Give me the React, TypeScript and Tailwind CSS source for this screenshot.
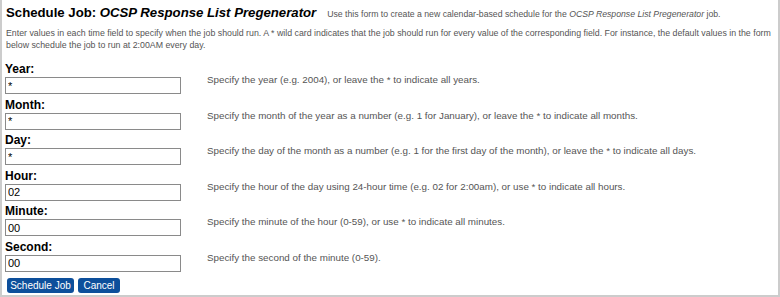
const rows = [
  { label: "Year:", value: "*", hint: "Specify the year (e.g. 2004), or leave the * to indicate all years." },
  { label: "Month:", value: "*", hint: "Specify the month of the year as a number (e.g. 1 for January), or leave the * to indicate all months." },
  { label: "Day:", value: "*", hint: "Specify the day of the month as a number (e.g. 1 for the first day of the month), or leave the * to indicate all days." },
  { label: "Hour:", value: "02", hint: "Specify the hour of the day using 24-hour time (e.g. 02 for 2:00am), or use * to indicate all hours." },
  { label: "Minute:", value: "00", hint: "Specify the minute of the hour (0-59), or use * to indicate all minutes." },
  { label: "Second:", value: "00", hint: "Specify the second of the minute (0-59)." },
];

export default function App() {
  return (
    <div className="w-[780px] h-[297px] bg-white border-l-2 border-r-2 border-b-2 border-[#cccccc] font-['Liberation_Sans',Arial,sans-serif] text-black overflow-hidden">
      <div className="pl-[4px] pt-[4px] flex items-baseline whitespace-nowrap">
        <h1 className="text-[13.2px] font-bold leading-[18px]">
          Schedule Job: <i>OCSP Response List Pregenerator</i>
        </h1>
        <span className="ml-[11px] text-[8.7px] text-[#555]">
          Use this form to create a new calendar-based schedule for the <i>OCSP Response List Pregenerator</i> job.
        </span>
      </div>
      <p className="pl-[4px] pr-[2px] mt-[5px] text-[8.8px] leading-[12px] text-[#555]">
        Enter values in each time field to specify when the job should run. A * wild card indicates that the job should run for every value of the corresponding field. For instance, the default values in the form below schedule the job to run at 2:00AM every day.
      </p>
      <div className="mt-[11px] pl-[3px]">
        {rows.map((r) => (
          <div key={r.label} className="flex h-[35.5px]">
            <div className="w-[202px] shrink-0">
              <div className="text-[12px] font-bold leading-[14px]">{r.label}</div>
              <input
                readOnly
                value={r.value}
                className="block mt-[1px] w-[176px] h-[17px] border border-[#8a8a8a] px-[2px] text-[11px] text-black outline-none font-['Liberation_Sans',Arial,sans-serif]"
              />
            </div>
            <div className="pt-[12px] text-[9.8px] text-[#555] leading-[12px] whitespace-nowrap">{r.hint}</div>
          </div>
        ))}
        <div className="flex gap-[4px] mt-[3px] pl-[2px]">
          <button className="h-[15px] w-[67px] rounded-[3px] bg-[#0d4f9b] text-white text-[10px] leading-[15px]">
            Schedule Job
          </button>
          <button className="h-[15px] w-[42px] rounded-[3px] bg-[#0d4f9b] text-white text-[10px] leading-[15px]">
            Cancel
          </button>
        </div>
      </div>
    </div>
  );
}
